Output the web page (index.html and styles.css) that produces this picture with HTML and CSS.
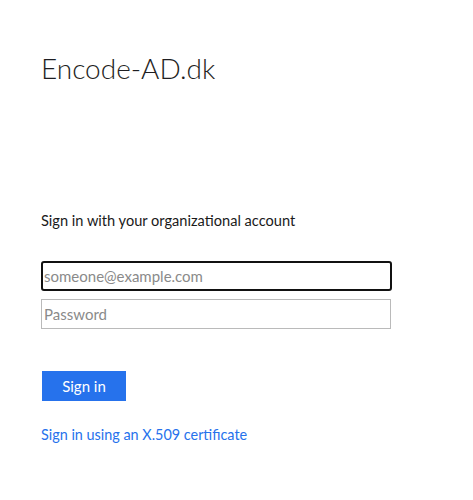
FILE: index.html
```html
<!DOCTYPE html>
<html lang="en">
<head>
<meta charset="utf-8">
<title>Sign In</title>
<link rel="stylesheet" href="styles.css">
</head>
<body>
<main class="login">
  <h1 class="brand">Encode-AD.dk</h1>
  <form class="form">
    <p class="intro">Sign in with your organizational account</p>
    <div class="fields">
      <input class="field field-focus" type="email" placeholder="someone@example.com">
      <input class="field" type="password" placeholder="Password">
    </div>
    <button class="submit" type="button">Sign in</button>
    <a class="cert-link" href="#">Sign in using an X.509 certificate</a>
  </form>
</main>
</body>
</html>
```
FILE: styles.css
```css
html, body {
  margin: 0;
  padding: 0;
  background: #fff;
}
body {
  font-family: "Lato", "Open Sans", sans-serif;
  font-size: 15px;
  line-height: 20px;
  color: #1a1a1a;
}
.login {
  display: flex;
  flex-direction: column;
  padding: 50px 0 0 41px;
}
.brand {
  margin: 0;
  font-size: 28px;
  line-height: 36px;
  font-weight: 300;
  color: #1e1e22;
}
.form {
  display: flex;
  flex-direction: column;
  align-items: flex-start;
  margin-top: 125px;
}
.intro {
  margin: 0;
  font-size: 14.6px;
  line-height: 20px;
}
.fields {
  display: flex;
  flex-direction: column;
  gap: 8px;
  margin-top: 30px;
}
.field {
  box-sizing: border-box;
  width: 350px;
  height: 30px;
  margin: 0;
  padding: 0 0 0 2px;
  border: 1px solid #bababa;
  border-radius: 0;
  font-family: inherit;
  font-size: 15px;
  color: #000;
  background: #fff;
  outline: none;
}
.field::placeholder {
  color: #8a8a8a;
}
.field-focus {
  width: 351px;
  border: 2px solid #111;
  border-radius: 3px;
  padding-left: 1px;
}
.submit {
  box-sizing: border-box;
  width: 84px;
  height: 30px;
  margin: 42px 0 0 1px;
  padding: 0;
  border: none;
  background: #2672ec;
  color: #fff;
  font-family: inherit;
  font-size: 15px;
  cursor: pointer;
}
.cert-link {
  margin-top: 24px;
  color: #2672ec;
  text-decoration: none;
  font-size: 14.4px;
}
```
